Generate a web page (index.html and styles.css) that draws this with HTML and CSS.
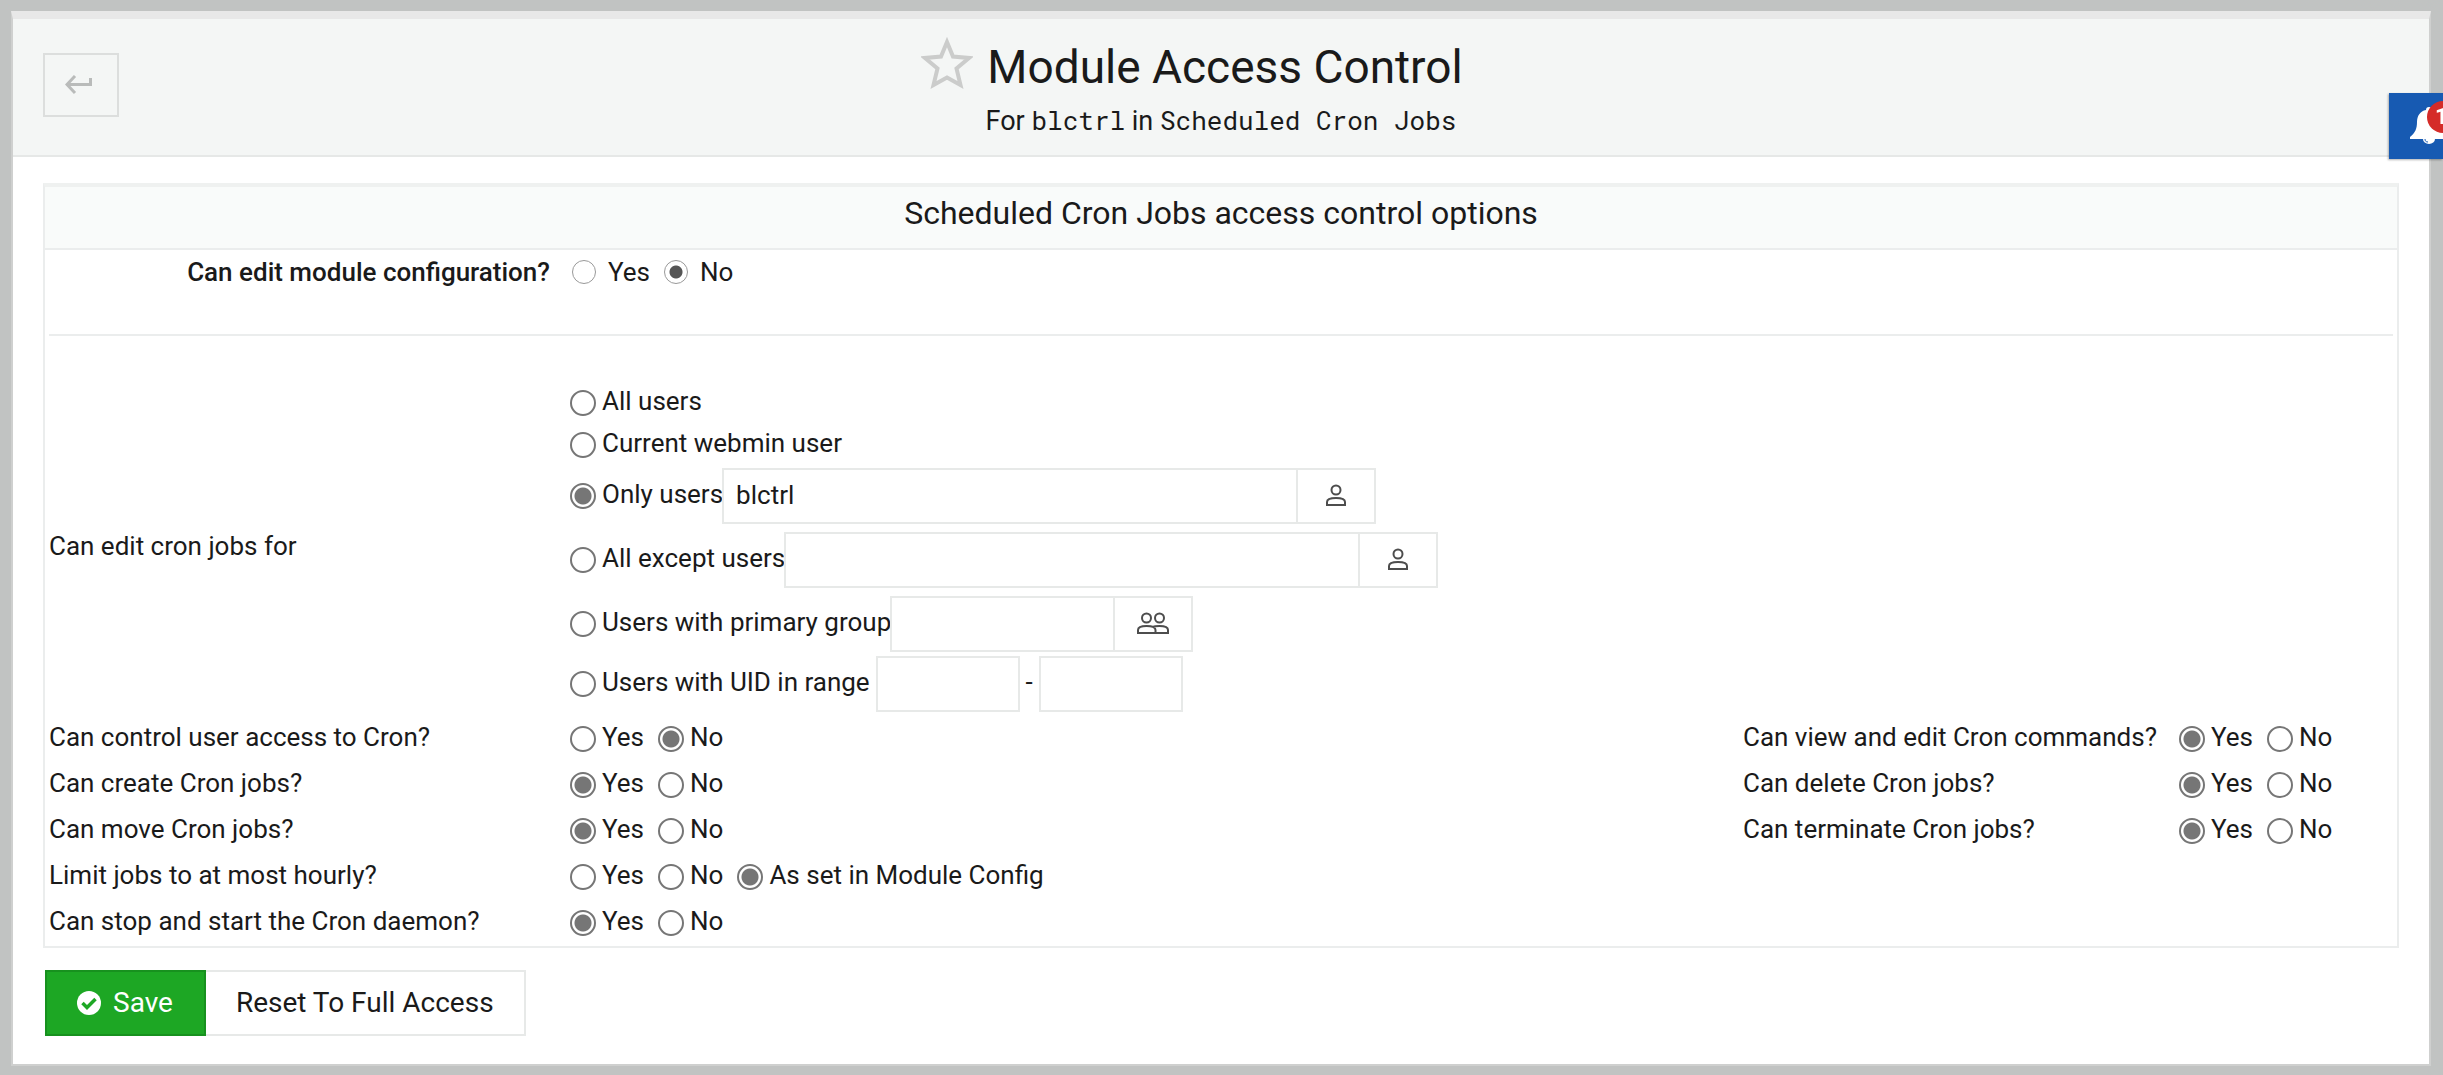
FILE: index.html
```html
<!doctype html>
<html lang="en">
<head>
	<meta charset="UTF-8">
	<title>Module Access Control</title>

	<link rel="stylesheet" href="styles.css">
</head>
<body>

	<div class="page">
		<header class="page-header">
			<button type="button" class="back" aria-label="Return">
				<svg width="28" height="20" viewBox="0 0 28 20"><path d="M25.500 3v6.500H3M10 1L2 9.500L10 18" fill="none" stroke="#b9bbba" stroke-width="3"/></svg>
			</button>
			<div class="headings">
				<h1>
					<svg class="star" width="52" height="52" viewBox="0 0 52 52"><path d="M26 5l6 14.500 16 1.500-12.500 10.500 4 16.500-13.500-7.500-13.500 7.500 4-16.500L4 21l16-1.500z" fill="none" stroke="#cbcccb" stroke-width="4"/></svg>
					Module Access Control
				</h1>
				<p>For <tt>blctrl</tt> in <tt>Scheduled Cron Jobs</tt></p>
			</div>
		</header>

		<form class="acl">
			<section class="panel">
				<h2>Scheduled Cron Jobs access control options</h2>

				<div class="panel-body">
					<div class="config" role="radiogroup" aria-labelledby="noconfig">
						<b id="noconfig">Can edit module configuration?</b>
						<label><input type="radio" name="noconfig">Yes</label>
						<label><input type="radio" name="noconfig" checked>No</label>
					</div>

					<hr>

					<table>
						<colgroup>
							<col class="col-label">
							<col>
							<col class="col-label-right">
							<col class="col-value-right">
						</colgroup>
						<tr>
							<td>Can edit cron jobs for</td>
							<td colspan="3" class="modes">
								<div class="line plain">
									<label><input type="radio" name="mode">All users</label>
								</div>
								<div class="line plain">
									<label><input type="radio" name="mode">Current webmin user</label>
								</div>
								<div class="line picker">
									<label><input type="radio" name="mode" checked>Only users</label>
									<input type="text" class="users" value="blctrl" aria-label="Only users">
									<button type="button" aria-label="Select users">
										<svg width="20" height="24" viewBox="0 0 20 24"><g fill="none" stroke="#4d4d4d" stroke-width="2"><circle cx="10" cy="7" r="4.500"/><path d="M1 22v-3c0-3 4-4 9-4s9 1 9 4v3z"/></g></svg>
									</button>
								</div>
								<div class="line picker">
									<label><input type="radio" name="mode">All except users</label>
									<input type="text" class="users" aria-label="All except users">
									<button type="button" aria-label="Select users">
										<svg width="20" height="24" viewBox="0 0 20 24"><g fill="none" stroke="#4d4d4d" stroke-width="2"><circle cx="10" cy="7" r="4.500"/><path d="M1 22v-3c0-3 4-4 9-4s9 1 9 4v3z"/></g></svg>
									</button>
								</div>
								<div class="line picker">
									<label><input type="radio" name="mode">Users with primary group</label>
									<input type="text" class="group" aria-label="Primary group">
									<button type="button" aria-label="Select group">
										<svg width="32" height="24" viewBox="0 0 32 24"><g fill="none" stroke="#4d4d4d" stroke-width="2"><circle cx="9.500" cy="7" r="4.500"/><circle cx="22.500" cy="7" r="4.500"/><path d="M1 22v-3c0-3 4-4 8.500-4s9 1 9 4v3zM15.500 16c2-1 4-1 7-1 5 0 8.500 1 8.500 4v3h-13"/></g></svg>
									</button>
								</div>
								<div class="line">
									<label><input type="radio" name="mode">Users with UID in range</label>
									<input type="text" class="uid uid-min" aria-label="Lowest UID">
									<span class="dash">-</span>
									<input type="text" class="uid" aria-label="Highest UID">
								</div>
							</td>
						</tr>
						<tr>
							<td>Can control user access to Cron?</td>
							<td>
								<div class="line">
									<label><input type="radio" name="allow">Yes</label>
									<label><input type="radio" name="allow" checked>No</label>
								</div>
							</td>
							<td>Can view and edit Cron commands?</td>
							<td>
								<div class="line">
									<label><input type="radio" name="command" checked>Yes</label>
									<label><input type="radio" name="command">No</label>
								</div>
							</td>
						</tr>
						<tr>
							<td>Can create Cron jobs?</td>
							<td>
								<div class="line">
									<label><input type="radio" name="create" checked>Yes</label>
									<label><input type="radio" name="create">No</label>
								</div>
							</td>
							<td>Can delete Cron jobs?</td>
							<td>
								<div class="line">
									<label><input type="radio" name="delete" checked>Yes</label>
									<label><input type="radio" name="delete">No</label>
								</div>
							</td>
						</tr>
						<tr>
							<td>Can move Cron jobs?</td>
							<td>
								<div class="line">
									<label><input type="radio" name="move" checked>Yes</label>
									<label><input type="radio" name="move">No</label>
								</div>
							</td>
							<td>Can terminate Cron jobs?</td>
							<td>
								<div class="line">
									<label><input type="radio" name="kill" checked>Yes</label>
									<label><input type="radio" name="kill">No</label>
								</div>
							</td>
						</tr>
						<tr>
							<td>Limit jobs to at most hourly?</td>
							<td colspan="3">
								<div class="line">
									<label><input type="radio" name="hourly">Yes</label>
									<label><input type="radio" name="hourly">No</label>
									<label><input type="radio" name="hourly" checked>As set in Module Config</label>
								</div>
							</td>
						</tr>
						<tr>
							<td>Can stop and start the Cron daemon?</td>
							<td colspan="3">
								<div class="line">
									<label><input type="radio" name="stop" checked>Yes</label>
									<label><input type="radio" name="stop">No</label>
								</div>
							</td>
						</tr>
					</table>
				</div>
			</section>

			<div class="actions">
				<button type="submit" class="save">
					<svg width="24" height="24" viewBox="0 0 24 24"><circle cx="12" cy="12" r="12" fill="#fff"/><path d="M5.500 12l4.500 4.500 8.500-8.500" fill="none" stroke="#1da724" stroke-width="3.500"/></svg>
					Save
				</button>
				<button type="submit" class="reset">Reset To Full Access</button>
			</div>
		</form>
	</div>

	<!-- notifications tab, hangs off the right edge -->
	<button type="button" class="notifications" aria-label="Notifications">
		<svg width="38" height="38" viewBox="0 0 38 38"><path d="M19 0c-2 0-3 1-3 3-6 1-9 6-9 12 0 7-2 11-7 15v2h38v-2c-5-4-7-8-7-15 0-6-3-11-9-12 0-2-1-3-3-3z" fill="#fff"/><path d="M13 32a6 5 0 0 0 12 0z" fill="#fff"/><path d="M15 32c0 2 1 3 3 3" fill="none" stroke="#175ab2" stroke-width="1"/></svg>
		<span class="badge">1</span>
	</button>

</body>
</html>
```

FILE: styles.css
```css
* {margin: 0; padding: 0; box-sizing: border-box;}
body {background-color: #c1c3c2; color: #1a1a1a; font: normal 26px/36px Roboto, sans-serif;}
button, input {font: inherit; color: inherit;}
svg {display: block;}

.page {margin: 11px 12px 9px 11px; min-height: calc(100vh - 20px); background-color: #fff; border: 2px solid #cfd0cf; border-top: 8px solid #e8e8e8;}

/* header */
.page-header {position: relative; height: 138px; background-color: #f4f6f5; border-bottom: 2px solid #e6e8e7; text-align: center;}
.back {position: absolute; left: 30px; top: 34px; width: 76px; height: 64px; padding-left: 20px; background: none; border: 2px solid #dcdedd;}
.headings {padding-top: 20px;}
.headings h1 {position: relative; display: inline-block; padding-left: 8px; font-size: 46px; font-weight: 400; line-height: 56px;}
.headings .star {position: absolute; right: 100%; top: -2px; margin-right: 6px;}
.headings p {margin-top: 7px; font-size: 27px;}
.headings tt {font-family: "Roboto Mono", "Liberation Mono", monospace; font-size: 26px;}

/* options panel */
.acl {padding: 26px 30px 0;}
.panel {border: 2px solid #ebeded; border-top: 4px solid #eff1f0;}
.panel h2 {height: 63px; padding-top: 2px; background-color: #f9fbfa; border-bottom: 2px solid #ebeded; font-size: 32px; font-weight: 400; line-height: 48px; text-align: center;}
.panel-body {padding: 0 4px;}
.panel hr {margin: 40px 0; border: 0; border-top: 2px solid #ebeded;}

input[type=radio] {appearance: none; flex: none; width: 26px; height: 26px; border: 2px solid #767676; border-radius: 50%; background-color: #fff;}
input[type=radio]:checked {background-image: radial-gradient(circle, #767676 8px, transparent 9px);}

.config {display: flex; height: 44px; align-items: center;}
.config b {width: 501px; margin-right: 22px; font-weight: 500; text-align: right;}
.config label {display: flex; align-items: center; gap: 12px; margin-right: 14px;}
.config input[type=radio] {width: 24px; height: 24px; border: 1px solid #999;}
.config input[type=radio]:checked {background-image: radial-gradient(circle, #555 6px, transparent 7px);}

table {width: 100%; table-layout: fixed; border-collapse: collapse;}
.col-label {width: 521px;}
.col-label-right {width: 436px;}
.col-value-right {width: 214px;}
td {height: 46px; padding-bottom: 4px; vertical-align: middle;}
td:nth-child(even) {padding-bottom: 0;}
tr:first-child td {padding-bottom: 0;}
tr:first-child .modes {padding: 4px 0;}

.line {display: flex; align-items: center;}
.line label {display: flex; align-items: center; gap: 6px; margin-right: 14px; padding-bottom: 4px; white-space: nowrap;}
.line input[type=radio] {margin-top: 4px;}
.plain {height: 42px;}
.plain label {padding-bottom: 0;}
.picker {padding: 4px 0;}
.picker label {margin-right: -1px;}
input[type=text] {height: 56px; padding: 0 12px 2px; border: 2px solid #e7e9e8; background-color: #fff;}
.picker button {display: flex; align-items: center; justify-content: center; width: 78px; height: 56px; padding-bottom: 2px; border: 2px solid #e7e9e8; border-left: 0; background-color: #fff;}
.users {width: 576px;}
.group {width: 225px;}
.uid {width: 144px;}
.uid-min {margin-left: -8px;}
.dash {width: 19px; padding-bottom: 4px; text-align: center;}

/* buttons under the panel */
.actions {display: flex; padding: 22px 2px;}
.actions button {display: flex; align-items: center; justify-content: center; gap: 12px; height: 66px; padding: 0 30px; font-size: 28px;}
.actions .save {padding: 0 31px 0 30px; color: #fff; background-color: #1da724; border: 2px solid #17911e;}
.reset {background-color: #fff; border: 2px solid #e7e9e8; border-left: 0;}

.notifications {position: fixed; top: 93px; right: 0; width: 54px; height: 66px; overflow: hidden; border: 0; background-color: #175ab2; box-shadow: -1px 1px 2px rgba(0, 0, 0, .3);}
.notifications svg {position: absolute; left: 21px; top: 14px;}
.badge {position: absolute; left: 38px; top: 8px; width: 32px; height: 32px; padding-left: 8px; border-radius: 50%; background-color: #d52b28; color: #fff; font-size: 22px; font-weight: 700; line-height: 32px; text-align: left;}
```
